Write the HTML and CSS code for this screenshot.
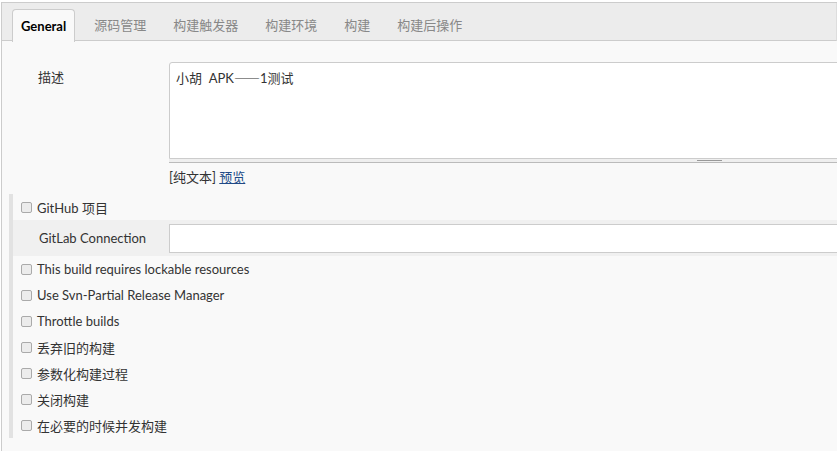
FILE: index.html
```html
<!DOCTYPE html>
<html lang="zh-CN">
<head>
  <meta charset="UTF-8">
  <title>General</title>
  <link rel="stylesheet" href="styles.css">
</head>
<body>
  <div class="config">
    <!-- Abas -->
    <div class="tabbar">
      <div class="tab active">General</div>
      <div class="tab">源码管理</div>
      <div class="tab">构建触发器</div>
      <div class="tab">构建环境</div>
      <div class="tab">构建</div>
      <div class="tab">构建后操作</div>
    </div>

    <!-- Descrição -->
    <div class="desc-row">
      <div class="desc-label">描述</div>
      <div class="desc-field">
        <div class="textarea">小胡&nbsp; APK<span class="dash">——</span>1测试</div>
        <div class="grip"><span></span></div>
        <div class="desc-links">[纯文本] <a href="#">预览</a></div>
      </div>
    </div>

    <!-- Opções -->
    <div class="section">
      <div class="check-row"><span class="checkbox"></span>GitHub 项目</div>
      <div class="field-row">
        <div class="field-label">GitLab Connection</div>
        <div class="input"></div>
      </div>
      <div class="check-row"><span class="checkbox"></span>This build requires lockable resources</div>
      <div class="check-row"><span class="checkbox"></span>Use Svn-Partial Release Manager</div>
      <div class="check-row"><span class="checkbox"></span>Throttle builds</div>
      <div class="check-row"><span class="checkbox"></span>丢弃旧的构建</div>
      <div class="check-row"><span class="checkbox"></span>参数化构建过程</div>
      <div class="check-row"><span class="checkbox"></span>关闭构建</div>
      <div class="check-row"><span class="checkbox"></span>在必要的时候并发构建</div>
    </div>
  </div>
</body>
</html>
```

FILE: styles.css
```css
body {
  margin: 0;
  background-color: white;
  font-family: Lato, "Noto Sans CJK SC", sans-serif;
  font-size: 13px;
  color: #333;
}
.config {
  margin: 2px 0 0 1px;
  border-top: 1px solid #ccc;
  border-left: 1px solid #ccc;
  background-color: #f9f9f9;
  height: 448px;
  overflow: hidden;
}
.tabbar {
  display: flex;
  gap: 9px;
  height: 37px;
  padding-left: 10px;
  background-color: #ececec;
  border-bottom: 1px solid #ccc;
  border-right: 1px solid #ddd;
}
.tab {
  margin-top: 6px;
  height: 31px;
  padding: 0 9px;
  display: flex;
  align-items: center;
  color: #888;
}
.tab.active {
  height: 32px;
  padding: 0 8px;
  margin-right: 1px;
  background-color: #f9f9f9;
  border: 1px solid #ccc;
  border-bottom: none;
  border-radius: 4px 4px 0 0;
  color: #000;
  font-weight: bold;
}
.desc-row {
  display: flex;
  padding: 21px 0 0 36px;
}
.desc-label {
  width: 131px;
  flex-shrink: 0;
  padding-top: 5px;
}
.desc-field {
  width: 1081px;
  flex-shrink: 0;
}
.textarea {
  box-sizing: border-box;
  height: 97px;
  padding: 5px 6px;
  background-color: white;
  border: 1px solid #ccc;
  border-radius: 3px 0 0 0;
  color: #333;
}
.dash {
  font-family: "Noto Sans CJK SC", sans-serif;
}
.grip {
  height: 3px;
  background-color: #efefef;
  border-bottom: 1px solid #bbb;
  display: flex;
  justify-content: center;
  align-items: center;
}
.grip span {
  width: 25px;
  height: 1px;
  background-color: #999;
}
.desc-links {
  margin-top: 6px;
  line-height: 16px;
}
.desc-links a {
  color: #204a87;
}
.section {
  margin: 9px 0 0 7px;
  border-left: 4px solid #e2e2e2;
}
.check-row {
  height: 26px;
  display: flex;
  align-items: center;
}
.checkbox {
  box-sizing: border-box;
  width: 11px;
  height: 11px;
  margin: 0 5px 0 8px;
  border: 1px solid #aaa;
  border-radius: 2px;
  background-color: #ececec;
}
.field-row {
  height: 36px;
  display: flex;
  align-items: center;
  background-color: #f0f0f0;
}
.field-label {
  width: 130px;
  padding-left: 26px;
  flex-shrink: 0;
}
.input {
  box-sizing: border-box;
  width: 1081px;
  flex-shrink: 0;
  height: 29px;
  margin-top: 1px;
  background-color: white;
  border: 1px solid #ccc;
}
```
